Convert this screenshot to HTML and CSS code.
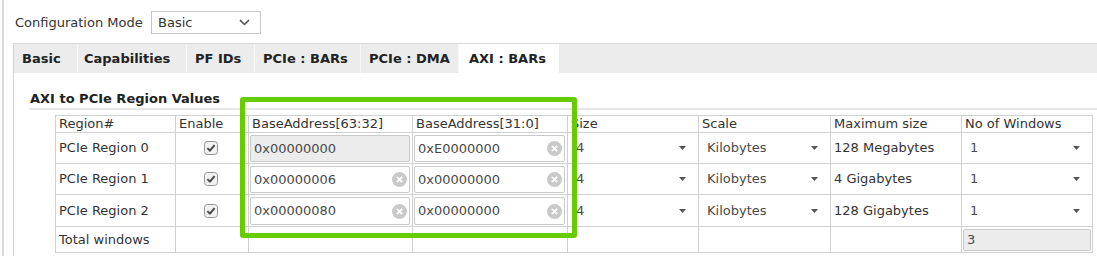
FILE: index.html
```html
<!DOCTYPE html>
<html>
<head>
<meta charset="utf-8">
<link rel="stylesheet" href="styles.css">
</head>
<body>
<div class="frame">
  <div class="config">
    <span class="config-label">Configuration Mode</span>
    <div class="select">
      <span>Basic</span>
      <svg class="chev" width="11" height="7" viewBox="0 0 11 7"><path d="M1 1.2 L5.5 5.5 L10 1.2" fill="none" stroke="#555" stroke-width="1.6"/></svg>
    </div>
  </div>

  <div class="panel">
    <div class="tabs">
      <div class="tab w-basic">Basic</div>
      <div class="tab w-cap">Capabilities</div>
      <div class="tab w-pf">PF IDs</div>
      <div class="tab w-pbar">PCIe : BARs</div>
      <div class="tab w-pdma">PCIe : DMA</div>
      <div class="tab w-axi active">AXI : BARs</div>
    </div>
    <div class="panel-body">
      <div class="section-title">AXI to PCIe Region Values</div>
      <div class="grid">
        <div class="c h">Region#</div>
        <div class="c h">Enable</div>
        <div class="c h">BaseAddress[63:32]</div>
        <div class="c h">BaseAddress[31:0]</div>
        <div class="c h">Size</div>
        <div class="c h">Scale</div>
        <div class="c h">Maximum size</div>
        <div class="c h">No of Windows</div>

        <!-- row 0 -->
        <div class="c">PCIe Region 0</div>
        <div class="c center"><svg class="cb" width="14" height="14" viewBox="0 0 14 14"><rect x="0.5" y="0.5" width="13" height="13" rx="3" fill="#f1f1f1" stroke="#959595"/><path d="M3.4 7.2 L5.9 9.7 L10.6 4.2" fill="none" stroke="#444" stroke-width="1.9"/></svg></div>
        <div class="c inp"><div class="field disabled">0x00000000</div></div>
        <div class="c inp"><div class="field">0xE0000000<svg class="clr" width="15" height="15" viewBox="0 0 15 15"><circle cx="7.5" cy="7.5" r="7.5" fill="#c9c9c9"/><path d="M4.8 4.8 L10.2 10.2 M10.2 4.8 L4.8 10.2" stroke="#fff" stroke-width="1.8"/></svg></div></div>
        <div class="c combo"><span>4</span><svg class="arr" width="7" height="4" viewBox="0 0 7 4"><path d="M0 0 H7 L3.5 4 Z" fill="#555"/></svg></div>
        <div class="c combo"><span>Kilobytes</span><svg class="arr" width="7" height="4" viewBox="0 0 7 4"><path d="M0 0 H7 L3.5 4 Z" fill="#555"/></svg></div>
        <div class="c">128 Megabytes</div>
        <div class="c combo"><span>1</span><svg class="arr" width="7" height="4" viewBox="0 0 7 4"><path d="M0 0 H7 L3.5 4 Z" fill="#555"/></svg></div>

        <!-- row 1 -->
        <div class="c">PCIe Region 1</div>
        <div class="c center"><svg class="cb" width="14" height="14" viewBox="0 0 14 14"><rect x="0.5" y="0.5" width="13" height="13" rx="3" fill="#f1f1f1" stroke="#959595"/><path d="M3.4 7.2 L5.9 9.7 L10.6 4.2" fill="none" stroke="#444" stroke-width="1.9"/></svg></div>
        <div class="c inp"><div class="field">0x00000006<svg class="clr" width="15" height="15" viewBox="0 0 15 15"><circle cx="7.5" cy="7.5" r="7.5" fill="#c9c9c9"/><path d="M4.8 4.8 L10.2 10.2 M10.2 4.8 L4.8 10.2" stroke="#fff" stroke-width="1.8"/></svg></div></div>
        <div class="c inp"><div class="field">0x00000000<svg class="clr" width="15" height="15" viewBox="0 0 15 15"><circle cx="7.5" cy="7.5" r="7.5" fill="#c9c9c9"/><path d="M4.8 4.8 L10.2 10.2 M10.2 4.8 L4.8 10.2" stroke="#fff" stroke-width="1.8"/></svg></div></div>
        <div class="c combo"><span>4</span><svg class="arr" width="7" height="4" viewBox="0 0 7 4"><path d="M0 0 H7 L3.5 4 Z" fill="#555"/></svg></div>
        <div class="c combo"><span>Kilobytes</span><svg class="arr" width="7" height="4" viewBox="0 0 7 4"><path d="M0 0 H7 L3.5 4 Z" fill="#555"/></svg></div>
        <div class="c">4 Gigabytes</div>
        <div class="c combo"><span>1</span><svg class="arr" width="7" height="4" viewBox="0 0 7 4"><path d="M0 0 H7 L3.5 4 Z" fill="#555"/></svg></div>

        <!-- row 2 -->
        <div class="c">PCIe Region 2</div>
        <div class="c center"><svg class="cb" width="14" height="14" viewBox="0 0 14 14"><rect x="0.5" y="0.5" width="13" height="13" rx="3" fill="#f1f1f1" stroke="#959595"/><path d="M3.4 7.2 L5.9 9.7 L10.6 4.2" fill="none" stroke="#444" stroke-width="1.9"/></svg></div>
        <div class="c inp"><div class="field">0x00000080<svg class="clr" width="15" height="15" viewBox="0 0 15 15"><circle cx="7.5" cy="7.5" r="7.5" fill="#c9c9c9"/><path d="M4.8 4.8 L10.2 10.2 M10.2 4.8 L4.8 10.2" stroke="#fff" stroke-width="1.8"/></svg></div></div>
        <div class="c inp"><div class="field">0x00000000<svg class="clr" width="15" height="15" viewBox="0 0 15 15"><circle cx="7.5" cy="7.5" r="7.5" fill="#c9c9c9"/><path d="M4.8 4.8 L10.2 10.2 M10.2 4.8 L4.8 10.2" stroke="#fff" stroke-width="1.8"/></svg></div></div>
        <div class="c combo"><span>4</span><svg class="arr" width="7" height="4" viewBox="0 0 7 4"><path d="M0 0 H7 L3.5 4 Z" fill="#555"/></svg></div>
        <div class="c combo"><span>Kilobytes</span><svg class="arr" width="7" height="4" viewBox="0 0 7 4"><path d="M0 0 H7 L3.5 4 Z" fill="#555"/></svg></div>
        <div class="c">128 Gigabytes</div>
        <div class="c combo"><span>1</span><svg class="arr" width="7" height="4" viewBox="0 0 7 4"><path d="M0 0 H7 L3.5 4 Z" fill="#555"/></svg></div>

        <!-- total -->
        <div class="c">Total windows</div>
        <div class="c"></div>
        <div class="c"></div>
        <div class="c"></div>
        <div class="c"></div>
        <div class="c"></div>
        <div class="c"></div>
        <div class="c inp total"><div class="field disabled">3</div></div>
      </div>
    </div>
  </div>

  <div class="highlight"></div>
</div>
</body>
</html>
```

FILE: styles.css
```css
* { box-sizing: border-box; }

html, body {
  margin: 0;
  padding: 0;
  background: #fff;
}

body {
  font-family: "DejaVu Sans", "Liberation Sans", sans-serif;
  font-size: 13px;
  color: #333;
  padding-left: 2px;
  overflow: hidden;
}

.frame {
  position: relative;
  border-left: 2px solid #dadada;
  min-height: 256px;
  height: 256px;
}

.config {
  display: flex;
  align-items: center;
  padding: 11px 0 0 11px;
  height: 34px;
}

.config-label {
  width: 136px;
  line-height: 16px;
}

.select {
  width: 110px;
  height: 23px;
  border: 1px solid #c6c6c6;
  background: #fff;
  display: flex;
  align-items: center;
  justify-content: space-between;
  padding: 0 10px 0 6px;
}

.chev { display: block; }

.panel {
  margin: 9px 0 0 9px;
  border-left: 1px solid #d2d2d2;
  height: 213px;
}

.tabs {
  display: flex;
  height: 30px;
  background: #ececec;
  border-top: 1px solid #d8d8d8;
}

.tab {
  font-weight: bold;
  color: #222;
  display: flex;
  align-items: center;
  padding-left: 8px;
  border-right: 1px solid #f7f7f7;
  height: 29px;
}

.tab.active {
  background: #fff;
  padding-left: 10px;
  border-right: none;
}

.w-basic { width: 64px; }
.w-cap { width: 109px; padding-left: 6px; }
.w-pf { width: 68px; }
.w-pbar { width: 106px; }
.w-pdma { width: 98px; }
.w-axi { width: 100px; }

.panel-body {
  padding: 18px 0 0 15px;
}

.section-title {
  font-weight: bold;
  color: #222;
  line-height: 16px;
  padding: 0 0 1px 1px;
  border-bottom: 2px solid #e6e6e6;
}

.grid {
  margin: 5px 0 0 26px;
  display: grid;
  grid-template-columns: 120px 73px 164px 155px 131px 132px 131px 131px;
  grid-template-rows: 17px 31px 31px 32px 26px;
  border-left: 1px solid #d0d0d0;
  border-top: 1px solid #d0d0d0;
  width: 1038px;
}

.c {
  border-right: 1px solid #d0d0d0;
  border-bottom: 1px solid #d0d0d0;
  display: flex;
  align-items: center;
  padding: 0 3px;
  line-height: 16px;
  white-space: nowrap;
  overflow: hidden;
  color: #333;
}

.c.h { padding-left: 3px; }

.c.center { justify-content: center; padding: 0 0 0 0; }
.cb { display: block; margin-left: -2px; }

.c.inp {
  padding: 2px 2px 1px 1px;
  align-items: stretch;
}

.field {
  flex: 1;
  display: flex;
  align-items: center;
  justify-content: space-between;
  border: 1px solid #cacaca;
  border-radius: 2px;
  background: #fff;
  padding: 0 2px 0 3px;
  color: #4a4a4a;
}

.field.disabled {
  background: #ececec;
}

.clr { display: block; }

.c.total { padding: 2px 1px 1px 1px; }

.c.combo {
  justify-content: space-between;
  padding: 0 12px 0 8px;
  color: #4a4a4a;
}

.arr { display: block; }

.highlight {
  position: absolute;
  left: 236px;
  top: 97px;
  width: 337px;
  height: 141px;
  border: 5px solid #66cc00;
  border-radius: 3px;
}
```
